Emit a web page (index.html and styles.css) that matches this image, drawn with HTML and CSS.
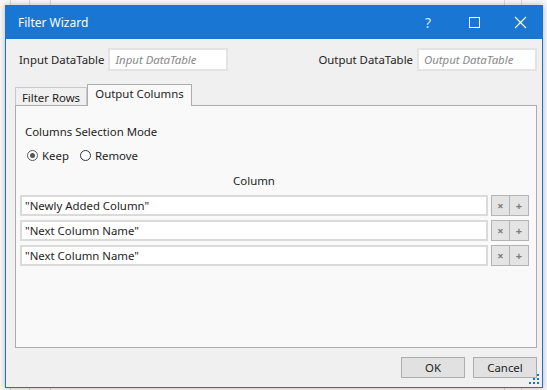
FILE: index.html
```html
<!DOCTYPE html>
<html>
<head>
<meta charset="utf-8">
<link rel="stylesheet" href="styles.css">
</head>
<body>
<div class="dialog">
  <div class="titlebar">
    <span class="title">Filter Wizard</span>
    <div class="controls">
      <span class="ctl help">?</span>
      <span class="ctl"><svg width="12" height="12" viewBox="0 0 12 12"><rect x="1.5" y="1.5" width="10" height="10" fill="none" stroke="#fff" stroke-width="1"/></svg></span>
      <span class="ctl"><svg width="13" height="13" viewBox="0 0 13 13"><path d="M1 1 L12 12 M12 1 L1 12" stroke="#fff" stroke-width="1.1"/></svg></span>
    </div>
  </div>
  <div class="body">
    <div class="io-row">
      <div class="io-group">
        <span class="io-label">Input DataTable</span>
        <div class="io-input placeholder">Input DataTable</div>
      </div>
      <div class="io-group">
        <span class="io-label">Output DataTable</span>
        <div class="io-input placeholder">Output DataTable</div>
      </div>
    </div>
    <div class="tabs">
      <div class="tab">Filter Rows</div>
      <div class="tab active">Output Columns</div>
    </div>
    <div class="panel">
      <div class="mode-label">Columns Selection Mode</div>
      <div class="radios">
        <label class="radio"><span class="dot checked"></span>Keep</label>
        <label class="radio"><span class="dot"></span>Remove</label>
      </div>
      <div class="col-head">Column</div>
      <div class="rows">
        <div class="row"><div class="cell">"Newly Added Column"</div><div class="btns"><span class="sbtn">×</span><span class="sbtn">+</span></div></div>
        <div class="row"><div class="cell">"Next Column Name"</div><div class="btns"><span class="sbtn">×</span><span class="sbtn">+</span></div></div>
        <div class="row"><div class="cell">"Next Column Name"</div><div class="btns"><span class="sbtn">×</span><span class="sbtn">+</span></div></div>
      </div>
    </div>
    <div class="footer">
      <span class="btn">OK</span>
      <span class="btn">Cancel</span>
    </div>
  </div>
  <svg class="grip" width="12" height="12" viewBox="0 0 12 12">
    <rect x="8" y="0" width="2" height="2" fill="#1a73d0"/>
    <rect x="4" y="4" width="2" height="2" fill="#1a73d0"/>
    <rect x="8" y="4" width="2" height="2" fill="#1a73d0"/>
    <rect x="0" y="8" width="2" height="2" fill="#1a73d0"/>
    <rect x="4" y="8" width="2" height="2" fill="#1a73d0"/>
    <rect x="8" y="8" width="2" height="2" fill="#1a73d0"/>
  </svg>
</div>
</body>
</html>
```
FILE: styles.css
```css
html, body { margin: 0; padding: 0; }
body {
  width: 547px;
  height: 390px;
  overflow: hidden;
  font-family: "Noto Sans", "Open Sans", sans-serif;
  font-size: 11.4px;
  color: #1e1e1e;
  background-color: #f7f7f7;
  background-image:
    linear-gradient(#d8d8d8, #d8d8d8),
    linear-gradient(#d8d8d8, #d8d8d8),
    linear-gradient(#d8d8d8, #d8d8d8),
    linear-gradient(#d8d8d8, #d8d8d8),
    linear-gradient(#d8d8d8, #d8d8d8);
  background-size: 1px 390px, 1px 390px, 1px 390px, 1px 390px, 1px 390px;
  background-position: 10px 0, 29px 0, 50px 0, 504px 0, 521px 0;
  background-repeat: no-repeat;
  padding: 5px;
  box-sizing: border-box;
}
.dialog {
  position: relative;
  width: 538px;
  height: 383px;
  box-sizing: border-box;
  border: 1px solid #1a73d0;
  border-top: none;
  background: #f0f0f0;
  display: flex;
  flex-direction: column;
  box-shadow: 0 0 6px rgba(0,0,0,0.25);
}
.titlebar {
  height: 34px;
  flex: none;
  background: #1976d2;
  margin: 0 -1px;
  display: flex;
  align-items: center;
  justify-content: space-between;
  color: #fff;
}
.title { margin-left: 13px; font-size: 12px; }
.controls { display: flex; align-items: center; height: 100%; }
.ctl {
  width: 46px;
  display: flex;
  justify-content: center;
  align-items: center;
}
.help { font-size: 14px; color: #d9e8f7; width: 46px; }
.body {
  flex: 1;
  display: flex;
  flex-direction: column;
  padding: 9px 5px 8px 9px;
}
.io-row {
  display: flex;
  justify-content: space-between;
  align-items: center;
  height: 23px;
  padding-left: 4px;
}
.io-group { display: flex; align-items: center; gap: 4px; }
.io-label { white-space: nowrap; }
.io-input {
  height: 19px;
  border: 2px solid #e3e3e3;
  background: #fff;
  line-height: 19px;
  padding-left: 5px;
  box-sizing: content-box;
  width: 111px;
  white-space: nowrap;
  overflow: hidden;
}
.placeholder { font-style: italic; color: #888; }
.tabs {
  display: flex;
  align-items: flex-end;
  margin-top: 13px;
  height: 21px;
  position: relative;
  z-index: 1;
}
.tab {
  height: 18px;
  line-height: 19px;
  border: 1px solid #c8c8c8;
  border-bottom: none;
  background: #f0f0f0;
  box-sizing: border-box;
  width: 72px;
  white-space: nowrap;
  text-align: center;
}
.tab.active {
  height: 22px;
  line-height: 18px;
  width: 105px;
  background: #f9f9f9;
  border-color: #acacac;
  margin-bottom: -1px;
}
.panel {
  height: 243px;
  box-sizing: border-box;
  border: 1px solid #acacac;
  background: #f9f9f9;
  display: flex;
  flex-direction: column;
  padding: 17px 7px 0 4px;
}
.mode-label { margin-left: 5px; height: 18px; line-height: 18px; }
.radios { display: flex; margin-top: 6px; margin-left: 7px; height: 16px; align-items: center; gap: 11px; }
.radio { display: flex; align-items: center; gap: 4px; }
.dot {
  width: 11px;
  height: 11px;
  border: 1px solid #333;
  border-radius: 50%;
  box-sizing: border-box;
  display: inline-flex;
  align-items: center;
  justify-content: center;
  background: #fff;
}
.dot.checked { border-color: #555; }
.dot.checked::after {
  content: "";
  width: 5px;
  height: 5px;
  border-radius: 50%;
  background: #555;
}
.col-head { text-align: center; margin-top: 9px; height: 17px; line-height: 17px; padding-right: 41px; }
.rows { display: flex; flex-direction: column; gap: 4px; margin-top: 6px; }
.row { display: flex; height: 21px; gap: 3px; }
.cell {
  flex: 1;
  border: 2px solid #dadada;
  background: #fff;
  padding-left: 3px;
  line-height: 17px;
  box-sizing: border-box;
}
.btns { display: flex; }
.sbtn {
  width: 19px;
  height: 21px;
  box-sizing: border-box;
  border: 1px solid #b4b4b4;
  background: #e4e4e4;
  color: #7a7a7a;
  font-size: 11px;
  font-weight: bold;
  display: flex;
  align-items: center;
  justify-content: center;
}
.sbtn + .sbtn { border-left: none; }
.footer {
  display: flex;
  justify-content: flex-end;
  gap: 8px;
  margin-top: 9px;
}
.btn {
  width: 64px;
  height: 21px;
  box-sizing: border-box;
  border: 1px solid #adadad;
  background: #e1e1e1;
  display: flex;
  align-items: center;
  justify-content: center;
}
.grip { position: absolute; right: 1px; bottom: 1px; }
```
